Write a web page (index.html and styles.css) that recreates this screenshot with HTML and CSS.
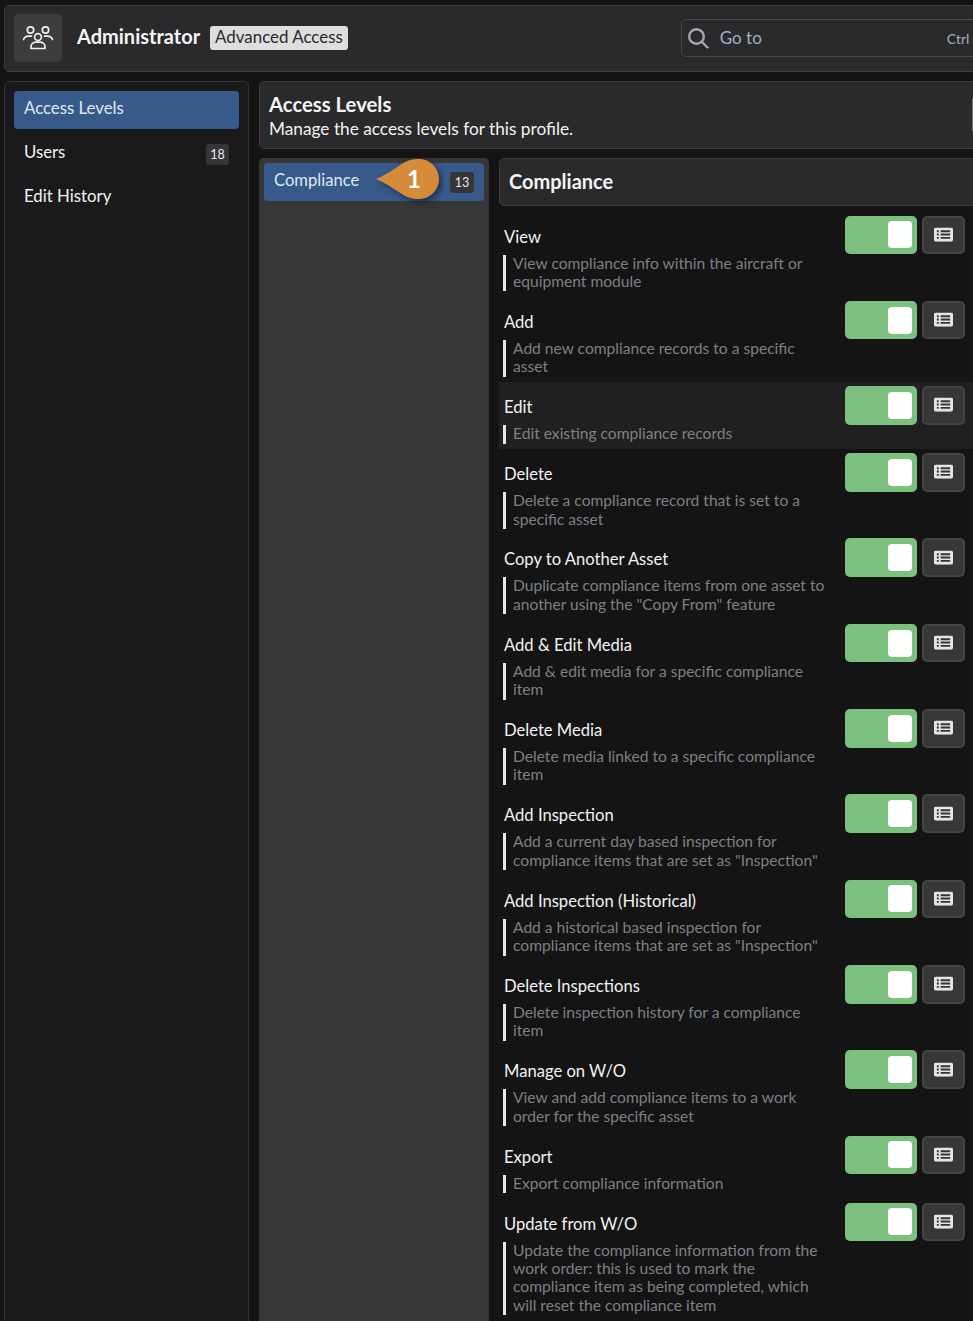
FILE: index.html
```html
<!DOCTYPE html>
<html lang="en">
<head>
<meta charset="utf-8">
<title>Administrator - Access Levels</title>
<link rel="stylesheet" href="styles.css">
</head>
<body>
<div class="page">
  <header class="topbar">
    <div class="avatar">
      <svg width="32" height="28" viewBox="0 0 32 28" fill="none" stroke="#eee" stroke-width="1.7" stroke-linecap="round">
        <circle cx="8.5" cy="6" r="3.2"/><circle cx="23.5" cy="6" r="3.2"/><circle cx="16" cy="13" r="3.4"/>
        <path d="M1.5 15.5c1-2.5 3-3.4 5-3.4h3M30.500 15.500c-1-2.500-3-3.400-5-3.400h-3"/>
        <path d="M9 24.500v-1.500c0-3 2.500-4.800 5-4.800h4c2.500 0 5 1.800 5 4.800v1.500z"/>
      </svg>
    </div>
    <div class="admin-name">Administrator</div>
    <div class="tag">Advanced Access</div>
    <div class="search">
      <svg class="search-icon" width="22" height="22" viewBox="0 0 22 22" fill="none" stroke="#a4a7ad" stroke-width="2.400" stroke-linecap="round"><circle cx="9.500" cy="9.500" r="7.300"/><path d="M15 15l5.500 5.500"/></svg>
      <span class="search-text">Go to</span>
      <span class="search-key">Ctrl</span>
    </div>
  </header>
  <div class="content">
    <nav class="sidenav">
      <a class="nav-item active">Access Levels</a>
      <a class="nav-item">Users<span class="count">18</span></a>
      <a class="nav-item">Edit History</a>
    </nav>
    <main class="main">
      <section class="page-head">
        <h1>Access Levels</h1>
        <p>Manage the access levels for this profile.</p>
        <span class="head-btn"></span>
      </section>
      <div class="columns">
        <aside class="modules">
          <a class="module active">Compliance<span class="count">13</span></a>
          <div class="callout">
            <svg width="70" height="50" viewBox="0 0 70 50"><path class="callout-shape" d="M2 21C14 16 24 8 31 4C36 1.500 41 1 45 1C56 1 65 10 65 21C65 32 56 41 45 41C41 41 36 40.500 31 38C24 34 14 26 2 21Z"/></svg>
            <span class="callout-num">1</span>
          </div>
        </aside>
        <section class="perms">
          <h2 class="perms-head">Compliance</h2>
          <div class="row"><div class="info"><h3>View</h3><p>View compliance info within the aircraft or<br>equipment module</p></div><div class="controls"><span class="toggle"><i></i></span><span class="list-btn"><svg width="19" height="15" viewBox="0 0 20 15"><use href="#list"/></svg></span></div></div>
          <div class="row"><div class="info"><h3>Add</h3><p>Add new compliance records to a specific<br>asset</p></div><div class="controls"><span class="toggle"><i></i></span><span class="list-btn"><svg width="19" height="15" viewBox="0 0 20 15"><use href="#list"/></svg></span></div></div>
          <div class="row hover"><div class="info"><h3>Edit</h3><p>Edit existing compliance records</p></div><div class="controls"><span class="toggle"><i></i></span><span class="list-btn"><svg width="19" height="15" viewBox="0 0 20 15"><use href="#list"/></svg></span></div></div>
          <div class="row"><div class="info"><h3>Delete</h3><p>Delete a compliance record that is set to a<br>specific asset</p></div><div class="controls"><span class="toggle"><i></i></span><span class="list-btn"><svg width="19" height="15" viewBox="0 0 20 15"><use href="#list"/></svg></span></div></div>
          <div class="row"><div class="info"><h3>Copy to Another Asset</h3><p>Duplicate compliance items from one asset to<br>another using the "Copy From" feature</p></div><div class="controls"><span class="toggle"><i></i></span><span class="list-btn"><svg width="19" height="15" viewBox="0 0 20 15"><use href="#list"/></svg></span></div></div>
          <div class="row"><div class="info"><h3>Add &amp; Edit Media</h3><p>Add &amp; edit media for a specific compliance<br>item</p></div><div class="controls"><span class="toggle"><i></i></span><span class="list-btn"><svg width="19" height="15" viewBox="0 0 20 15"><use href="#list"/></svg></span></div></div>
          <div class="row"><div class="info"><h3>Delete Media</h3><p>Delete media linked to a specific compliance<br>item</p></div><div class="controls"><span class="toggle"><i></i></span><span class="list-btn"><svg width="19" height="15" viewBox="0 0 20 15"><use href="#list"/></svg></span></div></div>
          <div class="row"><div class="info"><h3>Add Inspection</h3><p>Add a current day based inspection for<br>compliance items that are set as "Inspection"</p></div><div class="controls"><span class="toggle"><i></i></span><span class="list-btn"><svg width="19" height="15" viewBox="0 0 20 15"><use href="#list"/></svg></span></div></div>
          <div class="row"><div class="info"><h3>Add Inspection (Historical)</h3><p>Add a historical based inspection for<br>compliance items that are set as "Inspection"</p></div><div class="controls"><span class="toggle"><i></i></span><span class="list-btn"><svg width="19" height="15" viewBox="0 0 20 15"><use href="#list"/></svg></span></div></div>
          <div class="row"><div class="info"><h3>Delete Inspections</h3><p>Delete inspection history for a compliance<br>item</p></div><div class="controls"><span class="toggle"><i></i></span><span class="list-btn"><svg width="19" height="15" viewBox="0 0 20 15"><use href="#list"/></svg></span></div></div>
          <div class="row"><div class="info"><h3>Manage on W/O</h3><p>View and add compliance items to a work<br>order for the specific asset</p></div><div class="controls"><span class="toggle"><i></i></span><span class="list-btn"><svg width="19" height="15" viewBox="0 0 20 15"><use href="#list"/></svg></span></div></div>
          <div class="row"><div class="info"><h3>Export</h3><p>Export compliance information</p></div><div class="controls"><span class="toggle"><i></i></span><span class="list-btn"><svg width="19" height="15" viewBox="0 0 20 15"><use href="#list"/></svg></span></div></div>
          <div class="row"><div class="info"><h3>Update from W/O</h3><p>Update the compliance information from the<br>work order: this is used to mark the<br>compliance item as being completed, which<br>will reset the compliance item</p></div><div class="controls"><span class="toggle"><i></i></span><span class="list-btn"><svg width="19" height="15" viewBox="0 0 20 15"><use href="#list"/></svg></span></div></div>
        </section>
      </div>
    </main>
  </div>
</div>
<svg class="defs" width="0" height="0">
  <symbol id="list" viewBox="0 0 20 15">
    <path fill-rule="evenodd" fill="#e4e4e4" d="M2 0h16a2 2 0 0 1 2 2v11a2 2 0 0 1-2 2H2a2 2 0 0 1-2-2V2a2 2 0 0 1 2-2zM3 3v2h2V3zM7 3v2h10V3zM3 6.500v2h2v-2zM7 6.500v2h10v-2zM3 10v2h2v-2zM7 10v2h10v-2z"/>
  </symbol>
</svg>
</body>
</html>
```
FILE: styles.css
```css
* { box-sizing: border-box; }
html, body { margin: 0; height: 100%; overflow: hidden; background: #141414; }
body { font-family: Lato, "Noto Sans", sans-serif; color: #f2f2f2; font-size: 16px; }
.defs { position: absolute; }
.page { width: 1240px; padding: 5px 0 0 4px; }
.topbar { display: flex; align-items: center; height: 67px; background: #2a2a2c; border: 1px solid #3c3c3f; border-radius: 5px; padding: 0 9px 1px; }
.avatar { width: 48px; height: 48px; border-radius: 5px; background: #3d3d40; display: flex; align-items: center; justify-content: center; }
.admin-name { font-size: 20px; font-weight: 700; margin: 0 0 4px 15px; color: #f4f4f4; }
.tag { margin-left: 10px; background: #dedede; color: #2a2a2a; border-radius: 3px; font-size: 16.900px; height: 24px; line-height: 22px; padding: 0 5px; }
.search { margin-left: 333px; width: 500px; height: 38px; border: 1px solid #47474a; border-radius: 5px; display: flex; align-items: center; padding-left: 5px; }
.search-text { margin: 0 0 2px 11px; font-size: 17px; color: #9fb0c2; }
.search-key { margin-left: 185px; font-size: 14px; color: #9fb0c2; }
.content { display: flex; margin-top: 9px; gap: 10px; }
.sidenav { width: 245px; height: 1300px; flex: none; background: #1a1a1c; border: 1px solid #333336; border-radius: 5px; padding: 9px; display: flex; flex-direction: column; gap: 6px; }
.nav-item { display: flex; align-items: center; justify-content: space-between; height: 38px; padding: 0 10px 5px; border-radius: 4px; font-size: 16.800px; color: #f2f2f2; }
.nav-item.active { background: #375a8a; color: #dfe8f2; }
.nav-item .count { margin-bottom: -5px; }
.count { width: 23px; height: 21px; border-radius: 3px; background: #363638; color: #e8e8e8; font-size: 12.500px; line-height: 21px; text-align: center; }
.main { flex: 1; min-width: 0; }
.page-head { position: relative; height: 68px; background: #2a2a2c; border: 1px solid #3c3c3f; border-radius: 5px; padding: 9px; }
.page-head h1 { margin: 0; font-size: 20.300px; line-height: 26px; font-weight: 700; color: #f4f4f4; }
.page-head p { margin: 0; font-size: 17.250px; line-height: 23px; color: #f2f2f2; }
.head-btn { position: absolute; left: 712px; top: 14px; width: 40px; height: 38px; border: 1px solid #777; border-radius: 4px; }
.columns { display: flex; margin-top: 9px; gap: 10px; }
.modules { position: relative; width: 230px; flex: none; height: 1200px; background: #373737; border-radius: 5px; padding: 5px; }
.module { display: flex; align-items: center; justify-content: space-between; height: 38px; padding: 0 10px 4px; border-radius: 4px; background: #375a8a; color: #dfe8f2; font-size: 16.600px; }
.module .count { margin-bottom: -4px; width: 24px; }
.callout { position: absolute; left: 115px; top: 0; width: 70px; height: 50px; }
.callout-shape { fill: #d68b3a; filter: drop-shadow(3px 3px 3px rgba(5, 15, 40, .55)); }
.callout-num { position: absolute; left: 29px; top: 6px; width: 22px; height: 30px; line-height: 30px; text-align: center; font-size: 24px; font-weight: 700; color: #fff; }
.perms { flex: 1; min-width: 0; }
.perms-head { margin: 0 0 5.600px; height: 48px; line-height: 44px; padding-left: 9px; background: #2a2a2c; border: 1px solid #3c3c3f; border-radius: 5px; font-size: 20px; font-weight: 700; color: #f4f4f4; }
.row { display: flex; width: 474px; padding: 4px 8px 5.500px 4px; }
.row.hover { background: #202021; }
.info { width: 342px; padding-top: 9px; }
.info h3 { margin: 0 0 5px; padding-left: 1px; font-size: 16.600px; line-height: 24px; font-weight: 400; color: #f2f2f2; }
.info p { position: relative; margin: 0 0 1px; padding-left: 10px; font-size: 15.600px; line-height: 18.400px; color: #7d8086; }
.info p::before { content: ""; position: absolute; left: 0; top: 1px; bottom: -1px; width: 3px; background: #e8e8e8; }
.controls { display: flex; gap: 5px; align-items: flex-start; flex: none; width: 120px; }
.toggle { width: 72px; height: 38.500px; background: #7cc07f; border-radius: 5px; display: flex; justify-content: flex-end; align-items: center; padding-right: 5px; }
.toggle i { display: block; width: 24px; height: 27px; background: #fff; border-radius: 4px; }
.list-btn { width: 43px; height: 38.500px; padding-bottom: 1px; background: #373737; border: 2px solid #444; border-radius: 5px; display: flex; align-items: center; justify-content: center; }
.list-btn svg { display: block; }
```
